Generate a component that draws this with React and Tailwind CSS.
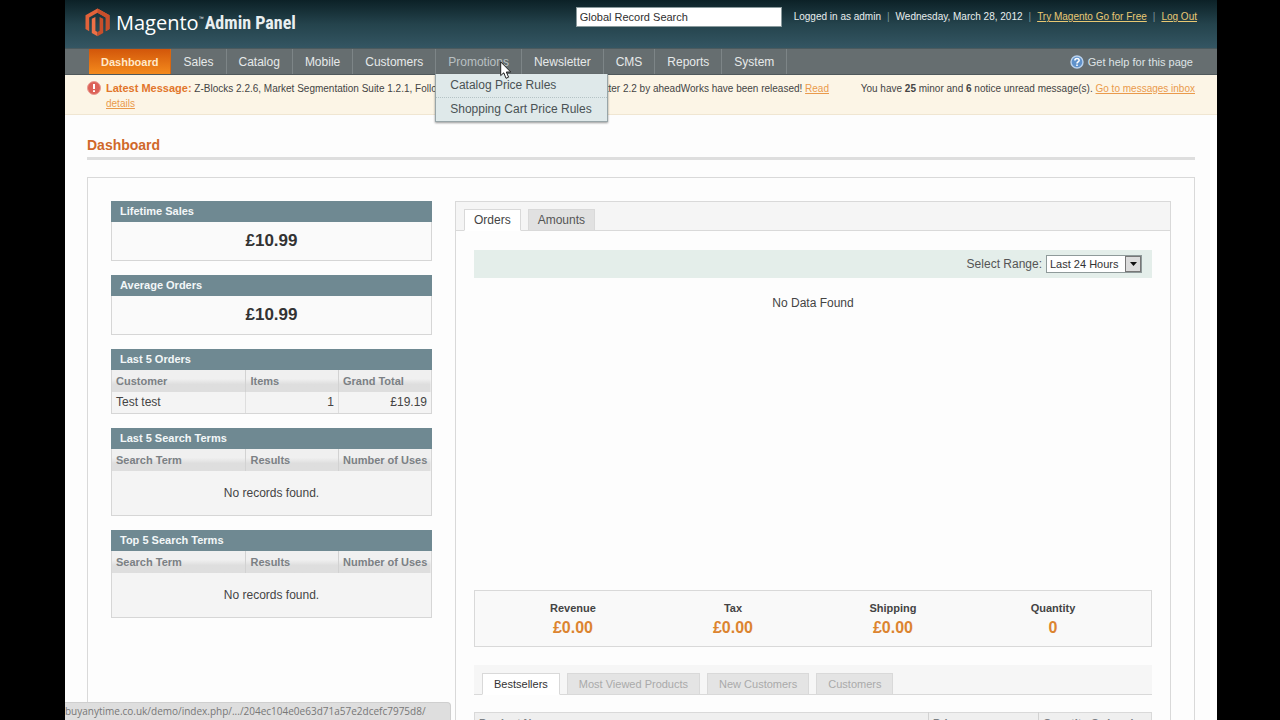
import { useState } from 'react';

const navItems = [
  { label: 'Dashboard', active: true },
  { label: 'Sales' },
  { label: 'Catalog' },
  { label: 'Mobile' },
  { label: 'Customers' },
  { label: 'Promotions', children: ['Catalog Price Rules', 'Shopping Cart Price Rules'] },
  { label: 'Newsletter' },
  { label: 'CMS' },
  { label: 'Reports' },
  { label: 'System' },
];

const totals = [
  { label: 'Revenue', value: '£0.00' },
  { label: 'Tax', value: '£0.00' },
  { label: 'Shipping', value: '£0.00' },
  { label: 'Quantity', value: '0' },
];

const gridTabs = ['Bestsellers', 'Most Viewed Products', 'New Customers', 'Customers'];

function Logo() {
  return (
    <div className="flex items-center">
      <svg width="25" height="29" viewBox="0 0 25 29" className="mr-[6px]" aria-hidden="true">
        <path d="M12.5 0.5 L24.5 7.3 V21 L20.8 23.2 V9.4 L12.5 4.7 L4.2 9.4 V23.2 L0.5 21 V7.3 Z" fill="#e2623a" />
        <path d="M12.5 0.5 L24.5 7.3 V21 L20.8 23.2 V9.4 L12.5 4.7 Z" fill="#c94f2b" />
        <path d="M6.8 10.8 L10.4 8.9 V22.8 L12.5 24 V28.3 L6.8 25 Z" fill="#ee7046" />
        <path d="M18.2 10.8 L14.6 8.9 V22.8 L12.5 24 V28.3 L18.2 25 Z" fill="#c94f2b" />
      </svg>
      <span className="font-['Open_Sans',sans-serif] text-xl leading-7 font-medium text-white">Magento</span>
      <span className="self-start pt-1 text-[5px] leading-3 text-white">™</span>
      <span className="ml-px font-['Roboto_Condensed',Roboto,sans-serif] text-lg leading-7 font-bold text-[#e9eff0]">
        Admin Panel
      </span>
    </div>
  );
}

function Cursor() {
  return (
    <svg width="12" height="19" viewBox="0 0 12 19" className="pointer-events-none absolute top-3 left-16 z-20" aria-hidden="true">
      <path d="M0.7 0.9 V14.6 L3.8 11.8 L6 17.3 L8.6 16.2 L6.3 11 H10.7 Z" fill="#fff" stroke="#222" strokeWidth="1" />
    </svg>
  );
}

function Header() {
  return (
    <header className="flex h-12 items-start justify-between bg-linear-to-b from-[#0c2127] via-[#24434c] to-[#345663] px-5">
      <div className="pt-2">
        <Logo />
      </div>
      <div className="flex items-center gap-3 pt-[7px] text-[10px] leading-5 text-[#e8eeee]">
        <input
          type="text"
          aria-label="Global Record Search"
          defaultValue="Global Record Search"
          className="h-5 w-[206px] border border-[#8a9a9d] bg-white px-[3px] text-[11px] text-[#2f2f2f]"
        />
        <p className="flex gap-[6px] whitespace-nowrap">
          <span>Logged in as admin</span>
          <span className="text-[#7d979d]">|</span>
          <span>Wednesday, March 28, 2012</span>
          <span className="text-[#7d979d]">|</span>
          <a href="#go" className="text-[#e8c873] underline">Try Magento Go for Free</a>
          <span className="text-[#7d979d]">|</span>
          <a href="#logout" className="text-[#e8c873] underline">Log Out</a>
        </p>
      </div>
    </header>
  );
}

function Nav() {
  return (
    <nav className="flex h-[27px] items-stretch justify-between border-t border-b border-t-[#4b5a5e] border-b-[#4f585b] bg-[#666e70] px-6 text-xs leading-6 text-[#e6eaea]">
      <ul className="flex">
        {navItems.map((item) => (
          <li
            key={item.label}
            className={`relative border-r pt-px ${item.active ? 'border-[#d9660f] bg-linear-to-b from-[#d2560a] to-[#f48a1c] text-[11px] font-bold text-[#ffe9c9]' : 'border-[#7d8587]'}`}
          >
            <a href={`#${item.label}`} className={`block px-3 ${item.children ? 'text-[#b9c0c2]' : ''}`}>
              {item.label}
            </a>
            {item.children && (
              <>
                <ul className="absolute top-full -left-px z-10 w-[173px] border border-t-0 border-[#98a5a8] bg-[#dfe9ea] text-[#4a5254] shadow-[0_1px_2px_rgba(0,0,0,0.4)]">
                  {item.children.map((child) => (
                    <li key={child} className="border-b border-dotted border-[#b4c3c5] last:border-b-0">
                      <a href={`#${child}`} className="block px-[14px] leading-[23px] whitespace-nowrap">{child}</a>
                    </li>
                  ))}
                </ul>
                <Cursor />
              </>
            )}
          </li>
        ))}
      </ul>
      <a href="#help" className="flex items-center gap-1 text-[11px] text-[#dfe4e6]">
        <svg width="14" height="14" viewBox="0 0 14 14" aria-hidden="true">
          <circle cx="7" cy="7" r="6" fill="#5f92cb" stroke="#b9d2ee" strokeWidth="1.4" />
          <path d="M4.9 5.5 C4.9 2.8 9.2 2.9 9.1 5.4 C9 6.8 7 6.8 7 8.4 M7 9.6 V11" fill="none" stroke="#fff" strokeWidth="1.6" />
        </svg>
        Get help for this page
      </a>
    </nav>
  );
}

function Messages() {
  return (
    <div className="flex items-start gap-6 border-b border-[#f0e6d2] bg-[#fcf5e6] px-[22px] pt-[6px] pb-[3px] text-[10px] leading-[15px] text-[#444]">
      <div className="flex min-w-0 flex-1 gap-[5px]">
        <svg width="14" height="14" viewBox="0 0 14 14" className="shrink-0" aria-hidden="true">
          <circle cx="7" cy="7" r="6.5" fill="#dc6258" stroke="#e99b92" strokeWidth="1" />
          <path d="M7 3 V8 M7 9.3 V11" stroke="#fff" strokeWidth="2" />
        </svg>
        <p>
          <strong className="text-[11px] text-[#e2762b]">Latest Message:</strong> Z-Blocks 2.2.6, Market Segmentation Suite 1.2.1,
          Follow Up Email 3.4 and Advanced Newsletter 2.2 by aheadWorks have been released!{' '}
          <a href="#details" className="text-[#ea9a4c] underline">Read details</a>
        </p>
      </div>
      <p className="whitespace-nowrap">
        You have <strong>25</strong> minor and <strong>6</strong> notice unread message(s).{' '}
        <a href="#inbox" className="text-[#ea9a4c] underline">Go to messages inbox</a>
      </p>
    </div>
  );
}

function Box({ title, children }) {
  return (
    <section>
      <h2 className="bg-[#6f8992] px-[9px] text-[11px] leading-[21px] font-bold text-[#f3f7f8]">{title}</h2>
      <div className="border border-t-0 border-[#d6d6d6] bg-[#fafafa]">{children}</div>
    </section>
  );
}

function StatTable({ columns, row }) {
  return (
    <table className="w-full table-fixed border-collapse bg-[#f4f4f4] text-xs text-[#444]">
      <colgroup>
        <col className="w-[42%]" />
        <col className="w-[29%]" />
        <col className="w-[29%]" />
      </colgroup>
      <thead>
        <tr className="bg-linear-to-b from-[#f0f0f0] from-40% to-[#dedede] to-65%">
          {columns.map((column) => (
            <th key={column} className="border-r border-[#d2d2d2] px-1 text-left text-[11px] leading-[22px] font-bold whitespace-nowrap text-[#7b8084] last:border-r-0">
              {column}
            </th>
          ))}
        </tr>
      </thead>
      <tbody>
        {row ? (
          <tr>
            {row.map((cell, i) => (
              <td key={i} className="border-r border-[#dedede] px-1 text-right leading-[21px] first:text-left last:border-r-0">
                {cell}
              </td>
            ))}
          </tr>
        ) : (
          <tr>
            <td colSpan={3} className="py-[14px] text-center leading-4">No records found.</td>
          </tr>
        )}
      </tbody>
    </table>
  );
}

function ChartTabs({ tab, onChange }) {
  return (
    <div className="flex h-[29px] items-end gap-[7px] border-b border-[#d9d9d9] bg-[#f5f5f5] px-2 text-xs leading-5">
      {['Orders', 'Amounts'].map((name) => (
        <button
          key={name}
          type="button"
          onClick={() => onChange(name)}
          className={`-mb-px border px-[9px] ${tab === name ? 'border-[#d9d9d9] border-b-white bg-white text-[#444]' : 'border-[#d9d9d9] bg-[#e1e1e1] text-[#555]'}`}
        >
          {name}
        </button>
      ))}
    </div>
  );
}

export default function App() {
  const [tab, setTab] = useState('Orders');
  const [gridTab, setGridTab] = useState('Bestsellers');

  return (
    <div className="h-screen overflow-hidden bg-black pr-[63px] pl-[65px] font-['Liberation_Sans',Arial,sans-serif]">
      <div className="relative min-h-full bg-[#fdfdfd]">
        <Header />
        <Nav />
        <Messages />

        <main className="px-[22px] pt-5">
          <h1 className="border-b-[3px] border-[#dedede] pb-[2px] text-sm leading-5 font-bold text-[#d0682a]">Dashboard</h1>

          <div className="mt-[17px] grid grid-cols-[321px_1fr] items-start gap-[23px] border border-[#d9d9d9] px-[23px] pt-[23px] pb-6">
            <div className="flex flex-col gap-[14px]">
              <Box title="Lifetime Sales">
                <p className="text-center text-[17px] leading-[38px] font-bold text-[#333]">£10.99</p>
              </Box>
              <Box title="Average Orders">
                <p className="text-center text-[17px] leading-[38px] font-bold text-[#333]">£10.99</p>
              </Box>
              <Box title="Last 5 Orders">
                <StatTable columns={['Customer', 'Items', 'Grand Total']} row={['Test test', '1', '£19.19']} />
              </Box>
              <Box title="Last 5 Search Terms">
                <StatTable columns={['Search Term', 'Results', 'Number of Uses']} />
              </Box>
              <Box title="Top 5 Search Terms">
                <StatTable columns={['Search Term', 'Results', 'Number of Uses']} />
              </Box>
            </div>

            <div className="border border-[#d9d9d9]">
              <ChartTabs tab={tab} onChange={setTab} />
              <div className="px-[18px] pt-[19px] pb-5">
                <div className="flex h-7 items-center justify-end gap-1 bg-[#e4eeea] pr-[10px] text-xs text-[#555]">
                  <label htmlFor="range">Select Range:</label>
                  <div className="relative">
                    <select
                      id="range"
                      className="block h-[18px] w-24 appearance-none border border-[#8f9a9a] bg-white pl-[3px] text-[11px] leading-4 text-[#333]"
                    >
                      <option>Last 24 Hours</option>
                      <option>Last 7 Days</option>
                      <option>Current Month</option>
                    </select>
                    <span className="pointer-events-none absolute top-px right-px flex h-4 w-4 items-center justify-center border border-[#777] bg-[#dcdcdc]">
                      <svg width="7" height="4" viewBox="0 0 7 4" aria-hidden="true">
                        <path d="M0 0 H7 L3.5 4 Z" fill="#111" />
                      </svg>
                    </span>
                  </div>
                </div>

                <p className="h-[312px] pt-4 text-center text-xs leading-[18px] text-[#444]">No Data Found</p>

                <dl className="flex justify-between border border-[#d9d9d9] bg-[#f9f9f9] px-[18px] py-2 text-center">
                  {totals.map((total) => (
                    <div key={total.label} className="flex-1">
                      <dt className="text-[11px] leading-[18px] font-bold text-[#444]">{total.label}</dt>
                      <dd className="text-base leading-[21px] font-bold text-[#dc8430]">{total.value}</dd>
                    </div>
                  ))}
                </dl>

                <div className="mt-[18px] flex h-[30px] items-end gap-[7px] border-b border-[#d9d9d9] bg-[#f6f6f6] px-2 text-[11px] leading-5">
                  {gridTabs.map((name) => (
                    <button
                      key={name}
                      type="button"
                      onClick={() => setGridTab(name)}
                      className={`-mb-px border border-[#d9d9d9] px-[11px] ${gridTab === name ? 'border-b-white bg-white text-[#333]' : 'bg-[#e4e4e4] text-[#aaa]'}`}
                    >
                      {name}
                    </button>
                  ))}
                </div>

                <table className="mt-[17px] w-full border-collapse border border-[#d9d9d9] text-xs text-[#555]">
                  <thead>
                    <tr className="bg-[#efefef] text-left text-[11px] leading-5 text-[#7b8084]">
                      <th className="px-1">Product Name</th>
                      <th className="w-[110px] border-l border-[#d2d2d2] px-1">Price</th>
                      <th className="w-[113px] border-l border-[#d2d2d2] px-1">Quantity Ordered</th>
                    </tr>
                  </thead>
                </table>
              </div>
            </div>
          </div>
        </main>
      </div>

      <div className="fixed bottom-0 left-[65px] z-30 h-[18px] w-[386px] overflow-hidden rounded-tr border-t border-r border-[#cfcfcf] bg-[#dedede] font-['Open_Sans',sans-serif] text-[10px] leading-4 whitespace-nowrap text-[#777]">
        buyanytime.co.uk/demo/index.php/.../204ec104e0e63d71a57e2dcefc7975d8/
      </div>
    </div>
  );
}
